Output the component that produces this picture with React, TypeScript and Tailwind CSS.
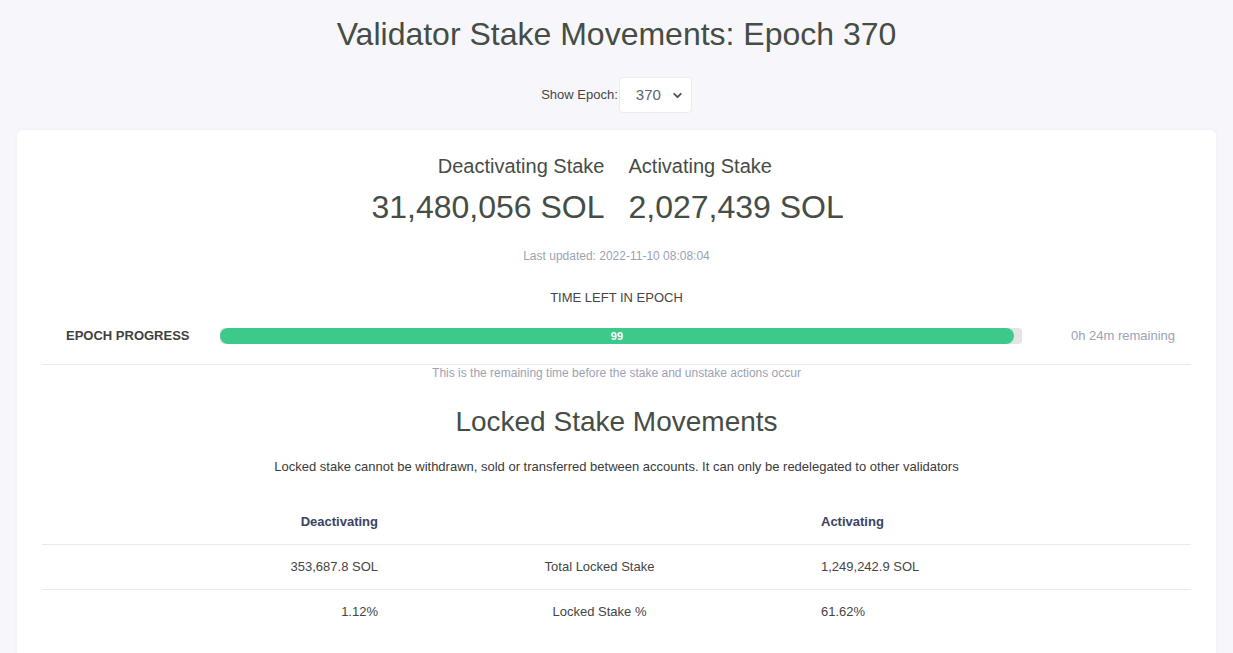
import React from "react";

export default function App() {
  const progress = 99;
  return (
    <div
      className="min-h-screen bg-[#f7f7fb] text-[#454d46]"
      style={{ fontFamily: '"Liberation Sans", Arial, sans-serif' }}
    >
      <div className="px-[17px] pt-[15px]">
        <h1 className="text-center text-[32px] leading-[38px] font-normal text-[#454d46]">
          Validator Stake Movements: Epoch 370
        </h1>
        <div className="mt-6 flex items-center justify-center">
          <span className="text-[13px] text-[#454545] mr-px">Show Epoch:</span>
          <div className="flex h-[36px] w-[73px] items-center rounded-[4px] border border-[#ececf0] bg-white pl-4 pr-2">
            <span className="text-[15px] text-[#5d6270]">370</span>
            <svg
              className="ml-auto"
              width="11"
              height="11"
              viewBox="0 0 10 10"
              fill="none"
            >
              <path
                d="M2 3.5 L5 6.5 L8 3.5"
                stroke="#4d5260"
                strokeWidth="1.7"
                strokeLinecap="round"
                strokeLinejoin="round"
              />
            </svg>
          </div>
        </div>

        <div className="mt-[17px] rounded-[6px] bg-white px-[25px] pt-6 pb-6 shadow-[0_0_4px_rgba(60,60,100,0.06)]">
          <div className="grid grid-cols-2 gap-6">
            <div className="text-right">
              <div className="text-[20px] leading-[24px]">Deactivating Stake</div>
              <div className="mt-[10px] text-[32px] leading-[38px]">31,480,056 SOL</div>
            </div>
            <div className="text-left">
              <div className="text-[20px] leading-[24px]">Activating Stake</div>
              <div className="mt-[10px] text-[32px] leading-[38px]">2,027,439 SOL</div>
            </div>
          </div>
          <div className="mt-[22px] text-center text-[12px] leading-[16px] text-[#9ca2b4]">
            Last updated: 2022-11-10 08:08:04
          </div>
          <div className="mt-[25px] text-center text-[13px] leading-[18px] text-[#454545]">
            TIME LEFT IN EPOCH
          </div>
          <div className="mt-[19px] flex items-center pb-[18px] border-b border-[#e8e8ee]">
            <div className="w-[178px] pl-6 text-[13px] font-semibold text-[#3f3f3f]">
              EPOCH PROGRESS
            </div>
            <div className="h-4 w-[802px] overflow-hidden rounded-[4px] bg-[#e3e3e8]">
              <div
                className="flex h-4 items-center justify-center rounded-full bg-[#3cc98a] text-[11px] font-bold text-white"
                style={{ width: `${progress}%` }}
              >
                {progress}
              </div>
            </div>
            <div className="flex-1 pr-4 text-right text-[13px] text-[#9ca2b4]">
              0h 24m remaining
            </div>
          </div>
          <div className="text-center text-[12px] leading-[16px] text-[#9ca2b4]">
            This is the remaining time before the stake and unstake actions occur
          </div>

          <h2 className="mt-6 text-center text-[28px] leading-[34px] font-normal">
            Locked Stake Movements
          </h2>
          <p className="mt-[19px] text-center text-[13px] leading-[18px] text-[#3a3a3a]">
            Locked stake cannot be withdrawn, sold or transferred between accounts. It can only be redelegated to other validators
          </p>

          <div className="mt-[25px] text-[13px] text-[#454545]">
            <div className="grid h-[44px] grid-cols-[348px_419px_1fr] items-center border-b border-[#e8e8ee] font-bold text-[#3b4262]">
              <div className="pr-3 text-right">Deactivating</div>
              <div className="text-center"></div>
              <div className="pl-3">Activating</div>
            </div>
            <div className="grid h-[45px] grid-cols-[348px_419px_1fr] items-center border-b border-[#e8e8ee]">
              <div className="pr-3 text-right">353,687.8 SOL</div>
              <div className="text-center">Total Locked Stake</div>
              <div className="pl-3">1,249,242.9 SOL</div>
            </div>
            <div className="grid h-[44px] grid-cols-[348px_419px_1fr] items-center">
              <div className="pr-3 text-right">1.12%</div>
              <div className="text-center">Locked Stake %</div>
              <div className="pl-3">61.62%</div>
            </div>
          </div>
        </div>
      </div>
    </div>
  );
}
